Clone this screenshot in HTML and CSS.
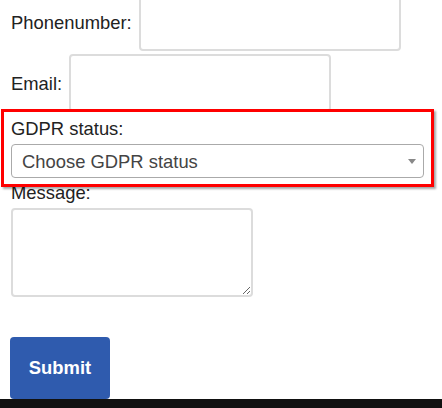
FILE: index.html
```html
<!DOCTYPE html>
<html lang="en">
<head>
<meta charset="utf-8">
<title>Contact form</title>
<link rel="stylesheet" href="styles.css">
</head>
<body>
<form class="form">
  <div class="row">
    <label class="label" for="phone">Phonenumber:</label>
    <input class="text-input" id="phone" type="text">
  </div>
  <div class="row row-email">
    <label class="label" for="email">Email:</label>
    <input class="text-input" id="email" type="text">
  </div>
  <div class="group">
    <label class="label block">GDPR status:</label>
    <div class="select">
      <span class="select-text">Choose GDPR status</span>
      <span class="select-arrow"></span>
    </div>
  </div>
  <label class="label block message-label" for="msg">Message:</label>
  <textarea class="textarea" id="msg"></textarea>
  <button class="submit" type="button">Submit</button>
</form>
<div class="bar"></div>
</body>
</html>
```

FILE: styles.css
```css
html, body {
  margin: 0;
  padding: 0;
  background: #fff;
}
body {
  font-family: "Liberation Sans", Arial, sans-serif;
  font-size: 18.4px;
  line-height: 21px;
  color: #222;
  overflow: hidden;
}
.form {
  margin-top: -7px;
  padding: 0 11px;
}
.row {
  display: flex;
  align-items: center;
  height: 58px;
}
.row-email {
  margin-top: 3px;
}
.label {
  font-size: 18.4px;
  line-height: 21px;
  color: #222;
}
.block {
  display: block;
}
.text-input {
  box-sizing: border-box;
  width: 262px;
  height: 58px;
  margin: 0 0 0 7px;
  border: 2px solid #dcdcdc;
  border-radius: 4px;
  background: #fff;
  outline: none;
}
.group {
  position: relative;
  width: 413px;
  margin-top: 6px;
}
.group::after {
  content: "";
  position: absolute;
  top: -9px;
  bottom: -9px;
  left: -10px;
  right: -10px;
  border: 3px solid #ff0000;
  box-shadow: 2px 2px 2px rgba(0, 0, 0, 0.35);
  pointer-events: none;
}
.select {
  box-sizing: border-box;
  margin-top: 5px;
  height: 34px;
  border: 1px solid #aaa;
  border-radius: 4px;
  display: flex;
  align-items: center;
  justify-content: space-between;
  padding: 0 7px 0 10px;
  background: #fff;
}
.select-text {
  color: #444;
  font-size: 18.4px;
}
.select-arrow {
  width: 0;
  height: 0;
  border-left: 4.5px solid transparent;
  border-right: 4.5px solid transparent;
  border-top: 5px solid #888;
  margin-top: 1px;
}
.message-label {
  margin-top: 4px;
}
.textarea {
  display: block;
  box-sizing: border-box;
  width: 242px;
  height: 89px;
  margin-top: 5px;
  border: 2px solid #dcdcdc;
  border-radius: 4px;
  resize: both;
  outline: none;
}
.submit {
  display: block;
  margin-top: 40px;
  width: 100px;
  height: 62px;
  margin-left: -1px;
  border: none;
  border-radius: 4px;
  background: #2f5bae;
  color: #fff;
  font-family: "Liberation Sans", Arial, sans-serif;
  font-size: 18.4px;
  font-weight: bold;
  padding: 0;
}
.bar {
  height: 20px;
  background: #111;
}
```
